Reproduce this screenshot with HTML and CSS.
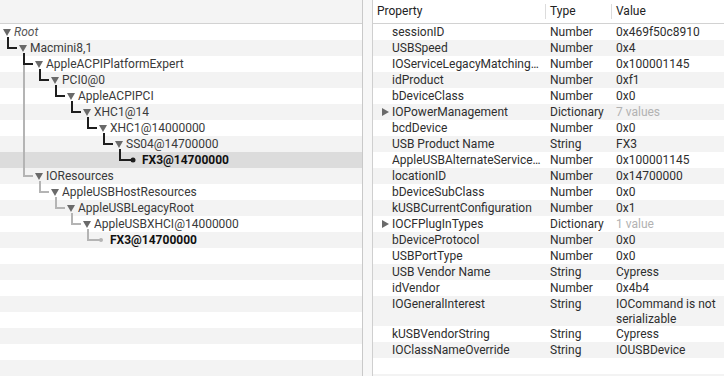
FILE: index.html
```html
<!DOCTYPE html>
<html lang="en">
<head>
    <meta charset="UTF-8">
    <meta name="viewport" content="width=device-width, initial-scale=1.0">
    <title>IORegistryExplorer</title>
    <link rel="stylesheet" href="styles.css">
</head>
<body>
    <div class="window">
        <section class="tree-pane">
            <div class="pane-head"></div>
            <div class="tree">
                <!-- connector lines, drawn over the rows -->
                <svg class="tree-lines" width="362" height="352" viewBox="0 0 362 352">
                    <g class="faint">
                        <path d="M24 29 V152 H33"/>
                        <path d="M40 157 V168 H49"/>
                        <path d="M56 173 V184 H65"/>
                        <path d="M72 189 V200 H81"/>
                        <path d="M88 205 V216 H100"/>
                        <circle cx="101" cy="216" r="2"/>
                    </g>
                    <g class="path">
                        <path d="M8 13 V24 H17"/>
                        <path d="M24 29 V40 H33"/>
                        <path d="M40 45 V56 H49"/>
                        <path d="M56 61 V72 H65"/>
                        <path d="M72 77 V88 H81"/>
                        <path d="M88 93 V104 H97"/>
                        <path d="M104 109 V120 H113"/>
                        <path d="M120 125 V136 H132"/>
                        <circle cx="133" cy="136" r="2.5"/>
                    </g>
                </svg>
                <div class="node lv0 root"><i class="tri"></i>Root</div>
                <div class="node lv1"><i class="tri"></i>Macmini8,1</div>
                <div class="node lv2"><i class="tri"></i>AppleACPIPlatformExpert</div>
                <div class="node lv3"><i class="tri"></i>PCI0@0</div>
                <div class="node lv4"><i class="tri"></i>AppleACPIPCI</div>
                <div class="node lv5"><i class="tri"></i>XHC1@14</div>
                <div class="node lv6"><i class="tri"></i>XHC1@14000000</div>
                <div class="node lv7"><i class="tri"></i>SS04@14700000</div>
                <div class="node lv8 leaf selected"><i class="tri"></i>FX3@14700000</div>
                <div class="node lv2"><i class="tri"></i>IOResources</div>
                <div class="node lv3"><i class="tri"></i>AppleUSBHostResources</div>
                <div class="node lv4"><i class="tri"></i>AppleUSBLegacyRoot</div>
                <div class="node lv5"><i class="tri"></i>AppleUSBXHCI@14000000</div>
                <div class="node lv6 leaf"><i class="tri"></i>FX3@14700000</div>
                <div class="node"></div>
                <div class="node"></div>
                <div class="node"></div>
                <div class="node"></div>
                <div class="node"></div>
                <div class="node"></div>
                <div class="node"></div>
                <div class="node"></div>
            </div>
        </section>

        <div class="splitter"></div>

        <section class="props-pane">
            <div class="props-head">
                <div>Property</div>
                <div class="sep">Type</div>
                <div class="sep">Value</div>
            </div>
            <div class="props">
                <div class="prop"><div class="name">sessionID</div><div>Number</div><div>0x469f50c8910</div></div>
                <div class="prop"><div class="name">USBSpeed</div><div>Number</div><div>0x4</div></div>
                <div class="prop"><div class="name">IOServiceLegacyMatching…</div><div>Number</div><div>0x100001145</div></div>
                <div class="prop"><div class="name">idProduct</div><div>Number</div><div>0xf1</div></div>
                <div class="prop"><div class="name">bDeviceClass</div><div>Number</div><div>0x0</div></div>
                <div class="prop"><div class="name group"><i class="disc"></i>IOPowerManagement</div><div>Dictionary</div><div class="muted">7 values</div></div>
                <div class="prop"><div class="name">bcdDevice</div><div>Number</div><div>0x0</div></div>
                <div class="prop"><div class="name">USB Product Name</div><div>String</div><div>FX3</div></div>
                <div class="prop"><div class="name">AppleUSBAlternateService…</div><div>Number</div><div>0x100001145</div></div>
                <div class="prop"><div class="name">locationID</div><div>Number</div><div>0x14700000</div></div>
                <div class="prop"><div class="name">bDeviceSubClass</div><div>Number</div><div>0x0</div></div>
                <div class="prop"><div class="name">kUSBCurrentConfiguration</div><div>Number</div><div>0x1</div></div>
                <div class="prop"><div class="name group"><i class="disc"></i>IOCFPlugInTypes</div><div>Dictionary</div><div class="muted">1 value</div></div>
                <div class="prop"><div class="name">bDeviceProtocol</div><div>Number</div><div>0x0</div></div>
                <div class="prop"><div class="name">USBPortType</div><div>Number</div><div>0x0</div></div>
                <div class="prop"><div class="name">USB Vendor Name</div><div>String</div><div>Cypress</div></div>
                <div class="prop"><div class="name">idVendor</div><div>Number</div><div>0x4b4</div></div>
                <div class="prop tall"><div class="name">IOGeneralInterest</div><div>String</div><div>IOCommand is not serializable</div></div>
                <div class="prop"><div class="name">kUSBVendorString</div><div>String</div><div>Cypress</div></div>
                <div class="prop"><div class="name">IOClassNameOverride</div><div>String</div><div>IOUSBDevice</div></div>
                <div class="prop"></div>
                <div class="prop"></div>
            </div>
        </section>
    </div>
</body>
</html>
```

FILE: styles.css
```css
html, body {
    margin: 0;
    height: 100%;
    overflow: hidden;
}

body {
    font-family: "Roboto", "Inter", sans-serif;
    font-size: 12px;
    color: #2e2e2e;
    background: #fff;
}

.window {
    display: flex;
    height: 376px;
}

/* left: registry tree */

.tree-pane {
    width: 362px;
    flex: none;
}

.pane-head {
    height: 23px;
    background: #f4f4f4;
    border-bottom: 1px solid #d2d2d2;
}

.tree {
    position: relative;
}

.tree-lines {
    position: absolute;
    top: 0;
    left: 0;
    pointer-events: none;
}

.tree-lines path {
    fill: none;
    stroke-width: 2;
}

.tree-lines .path path { stroke: #1e1e1e; }
.tree-lines .path circle { fill: #1e1e1e; }
.tree-lines .faint path { stroke: #b4b4b4; }
.tree-lines .faint circle { fill: #b4b4b4; }

.node {
    height: 16px;
    line-height: 16px;
    display: flex;
    align-items: center;
    white-space: nowrap;
    color: #3a3a3a;
}

.node:nth-of-type(even) {
    background: #f3f3f3;
}

.node.selected {
    background: #dcdcdc;
}

.tri {
    width: 0;
    height: 0;
    border-left: 4px solid transparent;
    border-right: 4px solid transparent;
    border-top: 7px solid #6a6a6a;
    margin-right: 3px;
}

.leaf .tri {
    visibility: hidden;
}

.leaf {
    font-weight: bold;
    color: #111;
}

.root {
    font-style: italic;
    color: #555;
}

.lv0 { padding-left: 3px; }
.lv1 { padding-left: 19px; }
.lv2 { padding-left: 35px; }
.lv3 { padding-left: 51px; }
.lv4 { padding-left: 67px; }
.lv5 { padding-left: 83px; }
.lv6 { padding-left: 99px; }
.lv7 { padding-left: 115px; }
.lv8 { padding-left: 131px; }

/* splitter */

.splitter {
    width: 9px;
    flex: none;
    background: #f7f7f7;
    border-left: 1px solid #c9c9c9;
    border-right: 1px solid #cfcfcf;
}

/* right: property table */

.props-pane {
    flex: 1;
    min-width: 0;
}

.props-head,
.prop {
    display: grid;
    grid-template-columns: 172px 66px 1fr;
}

.props-head {
    height: 23px;
    line-height: 23px;
    border-bottom: 1px solid #d2d2d2;
    color: #222;
}

.props-head div {
    padding-left: 4px;
}

.props-head .sep {
    padding-left: 5px;
    background: linear-gradient(#dcdcdc, #dcdcdc) no-repeat 0 4px / 1px 15px;
}

.prop {
    min-height: 16px;
    line-height: 16px;
}

.prop:nth-child(even) {
    background: #f3f3f3;
}

.prop div {
    padding-left: 5px;
    white-space: nowrap;
    overflow: hidden;
}

.prop .name {
    padding-left: 19px;
    display: flex;
    align-items: center;
}

.prop .name.group {
    padding-left: 9px;
}

.prop.tall {
    height: 30px;
    line-height: 15px;
}

.prop.tall div {
    padding-top: 1px;
    align-items: flex-start;
}

.prop.tall div:last-child {
    white-space: normal;
}

.disc {
    width: 0;
    height: 0;
    border-top: 4px solid transparent;
    border-bottom: 4px solid transparent;
    border-left: 7px solid #6a6a6a;
    margin-right: 3px;
}

.muted {
    color: #b2b2b2;
}
```
